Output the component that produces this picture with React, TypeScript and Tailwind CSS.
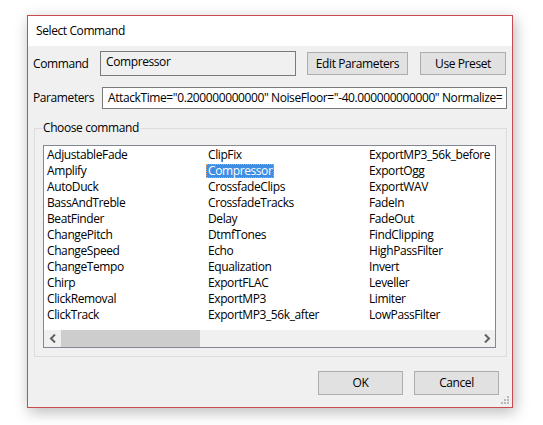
import React from "react";

const columns = [
  ["AdjustableFade", "Amplify", "AutoDuck", "BassAndTreble", "BeatFinder", "ChangePitch", "ChangeSpeed", "ChangeTempo", "Chirp", "ClickRemoval", "ClickTrack"],
  ["ClipFix", "Compressor", "CrossfadeClips", "CrossfadeTracks", "Delay", "DtmfTones", "Echo", "Equalization", "ExportFLAC", "ExportMP3", "ExportMP3_56k_after"],
  ["ExportMP3_56k_before", "ExportOgg", "ExportWAV", "FadeIn", "FadeOut", "FindClipping", "HighPassFilter", "Invert", "Leveller", "Limiter", "LowPassFilter"],
];

const Button = ({ label, className }: { label: string; className: string }) => (
  <button className={`bg-[#e1e1e1] border border-[#adadad] text-black text-[12px] leading-none ${className}`}>
    {label}
  </button>
);

const App = () => {
  return (
    <div
      className="w-[543px] h-[425px] bg-white pl-[27px] pt-[15px] tracking-[-0.4px]"
      style={{ fontFamily: '"Open Sans", "Noto Sans", sans-serif' }}
    >
      <div className="relative w-[486px] h-[393px] border border-[#c84c4c] bg-[#f0f0f0] shadow-[2px_4px_14px_rgba(0,0,0,0.28)] flex flex-col">
        {/* Title bar */}
        <div className="h-[30px] bg-white flex items-center pl-[8px] text-[12px] text-black">
          Select Command
        </div>

        {/* Command row */}
        <div className="flex items-start mt-[5px] h-[25px]">
          <span className="w-[72px] pl-[5px] text-[12px] leading-[25px] text-black">Command</span>
          <div className="w-[196px] h-[25px] border border-[#7a7a7a] bg-[#f0f0f0] pl-[5px] pt-[2px] text-[12px] leading-[16px] text-black">
            Compressor
          </div>
          <Button label="Edit Parameters" className="ml-[11px] mt-[1px] w-[101px] h-[23px]" />
          <Button label="Use Preset" className="ml-[12px] mt-[1px] w-[86px] h-[23px]" />
        </div>

        {/* Parameters row */}
        <div className="flex items-center mt-[11px] h-[22px]">
          <span className="w-[74px] pl-[5px] text-[12px] text-black">Parameters</span>
          <div className="w-[405px] h-[22px] border border-[#7a7a7a] bg-white pl-[5px] text-[12px] leading-[20px] text-black overflow-hidden whitespace-nowrap">
            AttackTime="0.200000000000" NoiseFloor="-40.000000000000" Normalize=
          </div>
        </div>

        {/* Choose command group */}
        <fieldset className="ml-[6px] mt-[11px] w-[473px] h-[237px] border border-[#dcdcdc] pl-[8px]">
          <legend className="text-[12px] leading-[16px] text-black px-[1px] ml-[-1px]">Choose command</legend>
          <div className="mt-[9px] w-[453px] h-[203px] border border-[#828790] bg-white flex flex-col">
            <div className="flex-1 flex pt-[1px] pl-[1px] overflow-hidden">
              {columns.map((col, ci) => (
                <div key={ci} className="w-[161px] shrink-0 flex flex-col">
                  {col.map((name) => {
                    const selected = name === "Compressor";
                    return (
                      <div key={name} className="h-[16px] flex items-center">
                        <span
                          className={`px-[2px] text-[12px] leading-[14px] whitespace-nowrap ${
                            selected
                              ? "bg-[#3d8ee4] text-white outline outline-1 outline-dotted outline-[#e8a060] -outline-offset-1"
                              : "text-black"
                          }`}
                        >
                          {name}
                        </span>
                      </div>
                    );
                  })}
                </div>
              ))}
            </div>
            {/* Horizontal scrollbar */}
            <div className="h-[17px] bg-[#f0f0f0] flex items-stretch">
              <div className="w-[17px] flex items-center justify-center">
                <svg width="8" height="9" viewBox="0 0 8 9">
                  <path d="M6 0.5 L2 4.5 L6 8.5" fill="none" stroke="#606060" strokeWidth="2" />
                </svg>
              </div>
              <div className="w-[139px] bg-[#cdcdcd]" />
              <div className="flex-1" />
              <div className="w-[17px] flex items-center justify-center">
                <svg width="8" height="9" viewBox="0 0 8 9">
                  <path d="M2 0.5 L6 4.5 L2 8.5" fill="none" stroke="#606060" strokeWidth="2" />
                </svg>
              </div>
            </div>
          </div>
        </fieldset>

        {/* Bottom buttons */}
        <div className="flex mt-[14px] pl-[290px] gap-[11px]">
          <Button label="OK" className="w-[85px] h-[24px]" />
          <Button label="Cancel" className="w-[85px] h-[24px]" />
        </div>

        {/* Resize grip */}
        <svg className="absolute right-[3px] bottom-[3px]" width="8" height="8" viewBox="0 0 8 8">
          <rect x="6" y="0" width="2" height="2" fill="#b8b8b8" />
          <rect x="3" y="3" width="2" height="2" fill="#b8b8b8" />
          <rect x="6" y="3" width="2" height="2" fill="#b8b8b8" />
          <rect x="0" y="6" width="2" height="2" fill="#b8b8b8" />
          <rect x="3" y="6" width="2" height="2" fill="#b8b8b8" />
          <rect x="6" y="6" width="2" height="2" fill="#b8b8b8" />
        </svg>
      </div>
    </div>
  );
};

export default App;
